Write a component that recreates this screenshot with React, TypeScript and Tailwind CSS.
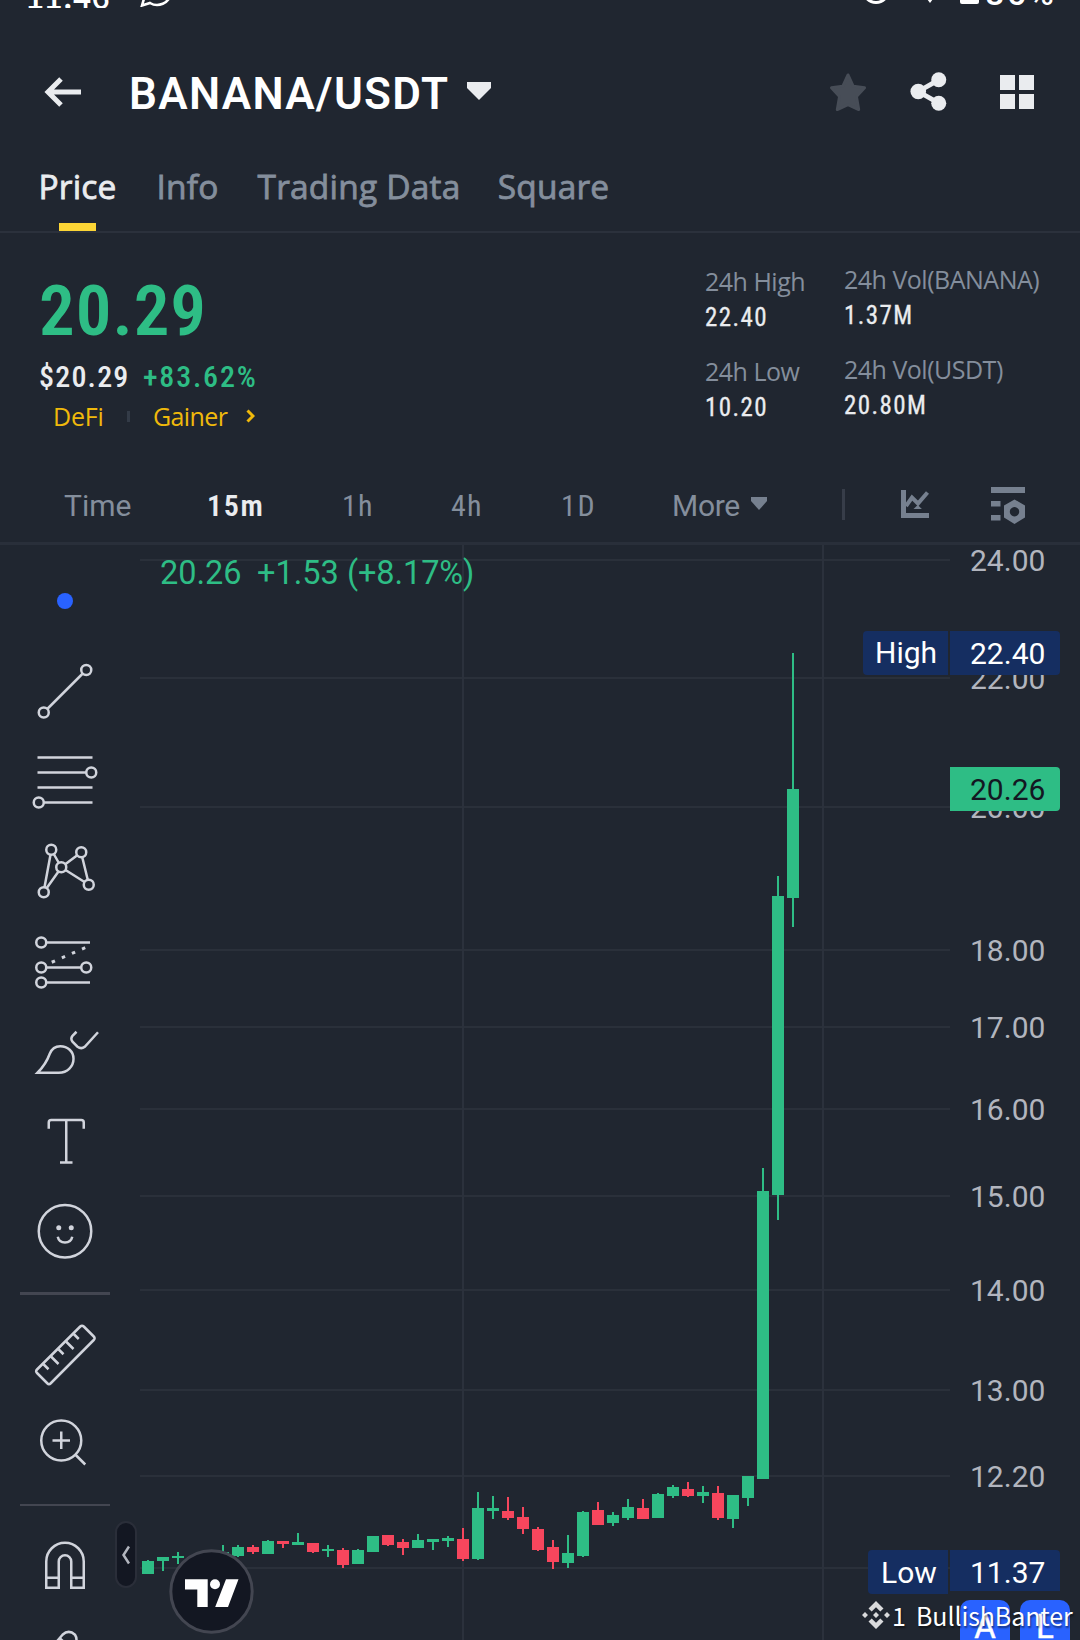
import type { ReactNode } from "react";

type Candle = [
  high: number,
  top: number,
  bottom: number,
  low: number,
  color: "g" | "r",
];

const GREEN = "#2ebd85";
const RED = "#f6465d";

// every candle is 12px wide and they sit 15px apart, y values are screen px
const candles: Candle[] = [
  [1560, 1561, 1573.5, 1573.5, "g"],
  [1557, 1557, 1561, 1570.5, "g"],
  [1552, 1556.3, 1558.3, 1564, "g"],
  [1556, 1557, 1560, 1562, "r"],
  [1552, 1555, 1559, 1562, "g"],
  [1545, 1552, 1556, 1558, "g"],
  [1545, 1547, 1555.7, 1557, "g"],
  [1545, 1547, 1552, 1554, "r"],
  [1540, 1541, 1553.7, 1553.7, "g"],
  [1541, 1541, 1543.7, 1548, "r"],
  [1533, 1542, 1544.7, 1544.7, "g"],
  [1543, 1543, 1552, 1553, "r"],
  [1545, 1549, 1551.3, 1557, "g"],
  [1548, 1550, 1564.7, 1568, "r"],
  [1549, 1550, 1563.7, 1563.7, "g"],
  [1536, 1536, 1552, 1552, "g"],
  [1535, 1535, 1545, 1546, "r"],
  [1539, 1542, 1548, 1555, "r"],
  [1534, 1540, 1548, 1548, "g"],
  [1539, 1539, 1542.4, 1550, "g"],
  [1536, 1538, 1541.4, 1547, "g"],
  [1528, 1539, 1559, 1561, "r"],
  [1492, 1508, 1559, 1560, "g"],
  [1496, 1508, 1510.7, 1519, "g"],
  [1497, 1511, 1518, 1520, "r"],
  [1507, 1517, 1529, 1534, "r"],
  [1527, 1529, 1550, 1551, "r"],
  [1540, 1547, 1562, 1569, "r"],
  [1535, 1553, 1563, 1568, "g"],
  [1511, 1512, 1556, 1557, "g"],
  [1502, 1510, 1525, 1525, "r"],
  [1512, 1515, 1523, 1526, "g"],
  [1499, 1507, 1518, 1520, "g"],
  [1499, 1508, 1519, 1519, "r"],
  [1493, 1494, 1518, 1518, "g"],
  [1485, 1487, 1496, 1498, "g"],
  [1482, 1489, 1496, 1497, "r"],
  [1486, 1492, 1496, 1503, "g"],
  [1486, 1493, 1518, 1520, "r"],
  [1495, 1495, 1519, 1528, "g"],
  [1476, 1476, 1498, 1506, "g"],
  [1168, 1191, 1479, 1479, "g"],
  [876, 896, 1195, 1220, "g"],
  [653, 789, 898, 927, "g"],
];

const gridLines = [
  { y: 560, label: "24.00" },
  { y: 678, label: "22.00" },
  { y: 807, label: "20.00" },
  { y: 950, label: "18.00" },
  { y: 1027, label: "17.00" },
  { y: 1109, label: "16.00" },
  { y: 1196, label: "15.00" },
  { y: 1290, label: "14.00" },
  { y: 1390, label: "13.00" },
  { y: 1476, label: "12.20" },
  { y: 1568, label: "" },
];

const CHART_TOP = 545;

function StatusBar() {
  return (
    <div className="flex h-2 items-end justify-between overflow-hidden pr-[21px] pl-[26px] text-white">
      <div className="flex items-end">
        <span className="mb-[-5px] w-[114px] font-['Noto_Sans_CJK_SC',sans-serif] text-[32px] leading-[36px] font-medium tracking-[0.3px]">
          11:46
        </span>
        <svg className="mb-[1px] h-8 w-8" viewBox="0 0 32 32">
          <path
            d="M2 30.5 4.5 22A14 14 0 1 1 10 28z"
            fill="none"
            stroke="currentColor"
            strokeWidth="2.6"
          />
        </svg>
      </div>
      <div className="flex items-end">
        <svg className="mr-[25px] mb-[4px] h-7 w-7" viewBox="0 0 28 28">
          <circle
            cx="14"
            cy="14"
            r="12.5"
            fill="none"
            stroke="currentColor"
            strokeWidth="3"
          />
        </svg>
        <svg className="mr-[15px] mb-[5px] h-6 w-[30px]" viewBox="0 0 30 24">
          <path d="M0 4Q15-4 30 4L15 24z" fill="currentColor" />
        </svg>
        <div className="mr-[6px] mb-[4px] h-7 w-[19px] rounded-[2px] bg-white" />
        <span className="mb-[-4px] w-[74px] text-[34px] leading-[38px] font-medium tracking-[2.5px]">
          86%
        </span>
      </div>
    </div>
  );
}

function Header() {
  return (
    <div className="flex h-[140px] items-center pt-7 pr-[46px] pl-[44px] text-[#eaecef]">
      <svg className="h-8 w-[37px]" viewBox="0 0 37 32">
        <path
          d="M37 16H4M17 3 4 16l13 13"
          fill="none"
          stroke="currentColor"
          strokeWidth="5"
        />
      </svg>
      <h1 className="mt-[3px] ml-[48px] w-[334px] text-[44px] leading-[52px] font-semibold tracking-[1.3px] whitespace-nowrap text-white">
        BANANA/USDT
      </h1>
      <svg className="mt-[-2px] ml-[4px] h-[18px] w-[24px]" viewBox="0 0 24 18">
        <path d="M0 0h24v6L12 18 0 6z" fill="currentColor" />
      </svg>
      <div className="ml-auto flex items-center">
        <svg className="h-[39px] w-[38px] text-[#474d57]" viewBox="0 0 38 40">
          <path
            d="M19 2l5.3 11.5L36 15.200l-8.300 8.800 2.300 13.500L19 32.500 8 37.500l2.300-13.500L2 15.200l11.700-1.700z"
            fill="currentColor"
            stroke="currentColor"
            strokeWidth="3"
            strokeLinejoin="round"
          />
        </svg>
        <svg
          className="mt-[-2px] ml-[43px] h-[39px] w-[37px]"
          viewBox="0 0 37 40"
          fill="currentColor"
        >
          <path
            d="M8 20 29 8M8 20l21 12"
            stroke="currentColor"
            strokeWidth="5"
          />
          <circle cx="8" cy="20" r="8" />
          <circle cx="29" cy="8" r="7.700" />
          <circle cx="29" cy="32" r="7.700" />
        </svg>
        <div className="mt-[-1px] ml-[53px] grid grid-cols-2 gap-1">
          <div className="h-[15px] w-[15px] bg-current" />
          <div className="h-[15px] w-[15px] bg-current" />
          <div className="h-[15px] w-[15px] bg-current" />
          <div className="h-[15px] w-[15px] bg-current" />
        </div>
      </div>
    </div>
  );
}

function Tab(props: { label: string; width: string; active?: boolean }) {
  return (
    <div className={`flex flex-col items-center ${props.width}`}>
      <span
        className={`text-[33.5px] leading-10 tracking-[0.2px] whitespace-nowrap [-webkit-text-stroke:0.8px_currentColor] ${props.active ? "text-[#eaecef]" : "text-[#848e9c]"}`}
      >
        {props.label}
      </span>
      {props.active && <div className="mt-[17px] h-2 w-[37px] bg-[#fcd535]" />}
    </div>
  );
}

function Tabs() {
  return (
    <div className="flex h-[85px] gap-[37px] border-b-2 border-[#2b313c] pt-[18px] pl-[38px] font-['Open_Sans',sans-serif]">
      <Tab label="Price" width="w-[79px]" active />
      <Tab label="Info" width="w-[67px]" />
      <Tab label="Trading Data" width="w-[202px]" />
      <Tab label="Square" width="w-[113px]" />
    </div>
  );
}

function Stat(props: { label: string; value: string }) {
  return (
    <div className="flex flex-col gap-[5px] text-[25px] leading-8 whitespace-nowrap">
      <span className="font-['Open_Sans',sans-serif] tracking-[-0.5px] text-[#848e9c]">
        {props.label}
      </span>
      <span className="font-stretch-condensed tracking-[1.4px] text-[#eaecef] [-webkit-text-stroke:0.3px_currentColor]">
        {props.value}
      </span>
    </div>
  );
}

function Summary() {
  return (
    <div className="flex h-[235px]">
      <div className="w-[705px] pt-[42px] pl-[39px]">
        <div className="font-stretch-condensed text-[71px] leading-[72px] font-semibold tracking-[1px] text-[#2ebd85]">
          20.29
        </div>
        <div className="mt-[10px] flex gap-[14px] text-[30px] leading-10 font-medium font-stretch-condensed">
          <span className="w-[90px] tracking-[1.2px] text-[#eaecef]">
            $20.29
          </span>
          <span className="tracking-[1.8px] text-[#2ebd85]">+83.62%</span>
        </div>
        <div className="mt-[3px] flex items-center pl-[14px] font-['Open_Sans',sans-serif] text-[25px] leading-8 tracking-[-0.6px] text-[#f0b90b]">
          <span className="w-[50px] tracking-[-0.2px]">DeFi</span>
          <div className="mr-[23px] ml-[24px] h-[11px] w-[3px] bg-[#333b47]" />
          <span className="w-[74px]">Gainer</span>
          <svg className="ml-[19px] h-[14px] w-[9px]" viewBox="0 0 9 14">
            <path
              d="M1.500 1.500 7 7l-5.500 5.500"
              fill="none"
              stroke="currentColor"
              strokeWidth="3"
            />
          </svg>
        </div>
      </div>
      <div className="flex w-[139px] flex-col gap-[21px] pt-8">
        <Stat label="24h High" value="22.40" />
        <Stat label="24h Low" value="10.20" />
      </div>
      <div className="flex flex-col gap-[21px] pt-[30px]">
        <Stat label="24h Vol(BANANA)" value="1.37M" />
        <Stat label="24h Vol(USDT)" value="20.80M" />
      </div>
    </div>
  );
}

function Intervals() {
  return (
    <div className="flex h-[77px] items-center border-b-3 border-[#292f3a] pt-[1px] pl-[64px] text-[30px] leading-10 text-[#848e9c]">
      <span className="mt-[1px] w-[143px]">Time</span>
      <span className="mt-[1px] w-[135px] font-semibold font-stretch-condensed tracking-[1.7px] text-[#eaecef]">
        15m
      </span>
      <span className="mt-[1px] w-[109px] font-stretch-condensed tracking-[1.3px]">
        1h
      </span>
      <span className="mt-[1px] w-[110px] font-stretch-condensed tracking-[1.3px]">
        4h
      </span>
      <span className="mt-[1px] w-[111px] font-stretch-condensed tracking-[1.6px]">
        1D
      </span>
      <span className="mt-[1px] w-[79px] tracking-[-0.3px]">More</span>
      <svg className="mt-[-5px] h-[13px] w-4" viewBox="0 0 16 13">
        <path d="M0 0h16v4L8 13 0 4z" fill="#76808f" />
      </svg>
      <div className="mt-[-3px] ml-[75px] h-[31px] w-[3px] bg-[#373d49]" />
      <svg
        className="mt-[-4px] ml-[56px] h-7 w-7"
        viewBox="0 0 28 28"
        fill="none"
        stroke="#76808f"
      >
        <path d="M2.500 0v25.500H28" strokeWidth="5" />
        <path d="M5 16l6-8.500 6 6L26.500 2.500" strokeWidth="4" />
        <path d="M12.500 19l4.200-4 4.200 4z" fill="#76808f" stroke="none" />
      </svg>
      <svg
        className="mt-[-1px] ml-[62px] h-[37px] w-[34px]"
        viewBox="0 0 34 37"
        fill="#76808f"
      >
        <path d="M0 0h34v6H0zM0 14h9.500v5.500H0zM0 28h9.500v5.500H0z" />
        <path
          fillRule="evenodd"
          d="M23.500 12.500 34 18.500v12L23.500 37 13 30.500v-12zM23.500 20a4.700 4.700 0 1 0 .01 0z"
        />
      </svg>
    </div>
  );
}

function Tool(props: { children: ReactNode }) {
  return (
    <div className="flex h-[90px] shrink-0 items-center justify-center">
      <svg
        className="h-[70px] w-[70px]"
        viewBox="0 0 28 28"
        fill="none"
        stroke="#d1d4dc"
        strokeWidth="1"
      >
        {props.children}
      </svg>
    </div>
  );
}

function Toolbar() {
  return (
    <div className="flex h-[1095px] w-[130px] shrink-0 flex-col overflow-hidden">
      <div className="flex h-[101px] shrink-0 justify-center pt-[48px]">
        <div className="h-4 w-4 rounded-full bg-[#2962ff]" />
      </div>
      <Tool>
        <circle cx="5.5" cy="22.600" r="2" />
        <circle cx="22.5" cy="5.600" r="2" />
        <path d="M7 21.100 21 7.100" />
      </Tool>
      <Tool>
        <path d="M3 4.600h22M3 10.600h19.500M3 16.600h22M5.500 22.600H25" />
        <circle cx="24.500" cy="10.600" r="2" />
        <circle cx="3.500" cy="22.600" r="2" />
      </Tool>
      <Tool>
        <path d="M8.200 7.500 5.800 20.500M9.500 7.200l2 3.500M11.400 14.200 6.700 20.800M14.100 11.300l4.800-3.600M14.200 13.600l7.600 4.800M20.900 8.500l2.200 9" />
        <circle cx="8.500" cy="5.500" r="2" />
        <circle cx="20.500" cy="6.500" r="2" />
        <circle cx="12.500" cy="12.500" r="2" />
        <circle cx="5.500" cy="22.500" r="2" />
        <circle cx="23.500" cy="19.500" r="2" />
      </Tool>
      <Tool>
        <path d="M6.500 6.600H24M6.500 16.600h14M6.500 22.600H24" />
        <path
          d="M8.700 14.500 22.500 8.500"
          strokeWidth="1.200"
          strokeDasharray="1.400 3"
        />
        <circle cx="4.500" cy="6.600" r="2" />
        <circle cx="4.500" cy="16.600" r="2" />
        <circle cx="4.500" cy="22.600" r="2" />
        <circle cx="22.500" cy="16.600" r="2" />
      </Tool>
      <Tool>
        <path d="M3 22.700H11.500c3.500 0 5.900-2.600 5.900-5.600 0-2.900-2.300-5-5.300-5-2 0-3.400 1-4.200 3-1 2.800-2.500 5.200-4.900 7.600z" />
        <path d="M18.600 6.300 17 7.900q-.9 1.100 0 2.400l2 2q1.500 1.100 2.900 0l5.300-5.800" />
      </Tool>
      <Tool>
        <path d="M7.500 9.100V6.600q0-1 1-1h12q1 0 1 1v2.500M14.500 5.600v17M12 22.600h5" />
      </Tool>
      <Tool>
        <circle cx="14" cy="14.100" r="10.500" />
        <circle cx="11.500" cy="12.700" r="1" fill="#d1d4dc" stroke="none" />
        <circle cx="16.500" cy="12.700" r="1" fill="#d1d4dc" stroke="none" />
        <path d="M11.100 16.300c.3 1.400 1.500 2.300 2.900 2.300s2.600-.9 2.900-2.300" />
      </Tool>
      <div className="mx-5 mt-4 mb-[14px] h-[3px] shrink-0 bg-[#434651]" />
      <Tool>
        <g transform="translate(.1 .4)">
          <path d="M20 2.600q.7-.7 1.400 0l4 4q.7.700 0 1.400L8.200 25.300q-.7.700-1.400 0l-4.100-4.100q-.7-.7 0-1.400z" />
          <path d="M5.300 17.700l2 2M8.300 14.600l3 3M11.300 11.700l2 2M14.300 8.600l3 3M17.400 5.600l2 2" />
        </g>
      </Tool>
      <Tool>
        <circle cx="12.500" cy="12.600" r="8" />
        <path d="M9 12.600h7M12.500 9v7M18.300 18.400l3.800 3.800" />
      </Tool>
      <div className="mx-5 my-[15px] h-[2px] shrink-0 bg-[#434651]" />
      <Tool>
        <path d="M6.500 22.700V12.200a7.500 7.500 0 0 1 15 0v10.500h-5V12.200a2.500 2.500 0 0 0-5 0v10.500zM6.500 18.700h5M16.500 18.700h5" />
      </Tool>
      <Tool>
        <path d="M5 15 13 5.500q2.500-2.300 5 0 1 1.600.3 3L14 14M12 7l5 4.500" />
      </Tool>
    </div>
  );
}

function CandleChart() {
  return (
    <svg
      className="h-[1095px] w-[810px] shrink-0"
      viewBox="140 545 810 1095"
      shapeRendering="crispEdges"
    >
      {gridLines.map((line) => (
        <rect
          key={line.y}
          x="140"
          y={line.y - 1}
          width="810"
          height="2"
          fill="#2a303a"
        />
      ))}
      <rect x="462" y="545" width="2" height="1095" fill="#2b313c" />
      <rect x="822" y="545" width="2" height="1095" fill="#2b313c" />
      {candles.map(([high, top, bottom, low, color], i) => (
        <g key={i} fill={color === "g" ? GREEN : RED}>
          <rect x={147 + i * 15} y={high} width="2" height={low - high} />
          <rect x={142 + i * 15} y={top} width="12" height={bottom - top} />
        </g>
      ))}
    </svg>
  );
}

function TradingViewBadge() {
  return (
    <svg
      className="absolute top-[1004px] left-[169px] h-[85px] w-[85px]"
      viewBox="0 0 85 85"
    >
      <circle
        cx="42.5"
        cy="42.500"
        r="40.700"
        fill="#131722"
        stroke="#434651"
        strokeWidth="3"
      />
      <path
        d="M16 30.300h22.700V58H28.300V40.600H16zM57 30.300h12.500L59 58H46.200z"
        fill="#fff"
      />
      <circle cx="46" cy="35.300" r="5" fill="#fff" />
    </svg>
  );
}

function Chart() {
  return (
    <div className="relative flex h-[1095px] overflow-hidden">
      <Toolbar />
      <div className="w-[10px] shrink-0" />
      <CandleChart />
      {gridLines.map((line) => (
        <span
          key={line.y}
          className="absolute left-[970px] text-[30px] leading-9 text-[#b2b5be]"
          style={{ top: line.y - CHART_TOP - 17 }}
        >
          {line.label}
        </span>
      ))}
      <div className="absolute top-[11px] left-[160px] flex text-[32.5px] leading-[35px] whitespace-pre text-[#2ebd85]">
        <span className="w-[97px]">20.26</span>
        <span className="w-[90px]">+1.53</span>
        <span className="tracking-[-0.1px]">(+8.17%)</span>
      </div>

      <div className="absolute top-[86px] left-[863px] flex gap-[2px] text-[30px] leading-[44px] text-white">
        <div className="h-11 w-[85px] rounded-l-[4px] bg-[#152e61] pl-[12px] leading-[43px]">
          High
        </div>
        <div className="h-11 w-[110px] rounded-r-[4px] bg-[#152e61] pl-5 leading-[46px]">
          22.40
        </div>
      </div>
      <div className="absolute top-[222px] left-[950px] h-11 w-[110px] rounded-r-[4px] bg-[#2ebd85] pl-5 text-[30px] leading-[46px] text-[#131722]">
        20.26
      </div>
      <div className="absolute top-[1005px] left-[868px] flex gap-[2px] text-[30px] leading-[46px] text-white">
        <div className="h-11 w-[80px] rounded-l-[4px] bg-[#152e61] pl-[13px]">
          Low
        </div>
        <div className="h-[41px] w-[110px] rounded-tr-[4px] bg-[#152e61] pl-5">
          11.37
        </div>
      </div>

      <div className="absolute top-[1055px] left-[960px] flex gap-[10px] text-center text-[33px] leading-[54px] text-white [-webkit-text-stroke:0.5px_currentColor]">
        <div className="h-[50px] w-[50px] rounded-[10px] bg-[#2962ff]">A</div>
        <div className="h-[50px] w-[50px] rounded-[10px] bg-[#2962ff]">L</div>
      </div>

      <div className="absolute top-[976px] left-[115px] flex h-[67px] w-[22px] items-center justify-center rounded-full border-2 border-[#2a2e39] bg-[#131722]">
        <svg className="h-5 w-2" viewBox="0 0 8 20">
          <path
            d="M7 1.500 1.500 10 7 18.500"
            fill="none"
            stroke="#b2b5be"
            strokeWidth="2.500"
          />
        </svg>
      </div>
      <TradingViewBadge />

      <div className="absolute top-[1052px] left-[862px] flex items-center text-[25px] leading-[36px] whitespace-nowrap text-white text-shadow-[1px_2px_2px_rgb(0_0_0/0.5)]">
        <svg className="h-7 w-7" viewBox="0 0 28 28" fill="#d9dadc">
          <path d="M14 0l7.500 7.400-3.200 3.100L14 6.300 9.700 10.500 6.500 7.400zM6.500 20.600l3.200-3.100 4.300 4.200 4.300-4.200 3.200 3.100L14 28zM0 14l3-3 3 3-3 3zM22 14l3-3 3 3-3 3zM11 14l3-3 3 3-3 3z" />
        </svg>
        <span className="ml-[2px] w-[24px] font-['Noto_Sans_CJK_SC',sans-serif]">
          1
        </span>
        <span className="font-['Noto_Sans_CJK_SC',sans-serif] tracking-[-0.1px]">
          BullishBanter
        </span>
      </div>
    </div>
  );
}

export default function App() {
  return (
    <div className="h-[1640px] w-[1080px] overflow-hidden bg-[#202630] font-['Roboto',sans-serif]">
      <StatusBar />
      <Header />
      <Tabs />
      <Summary />
      <Intervals />
      <Chart />
    </div>
  );
}
